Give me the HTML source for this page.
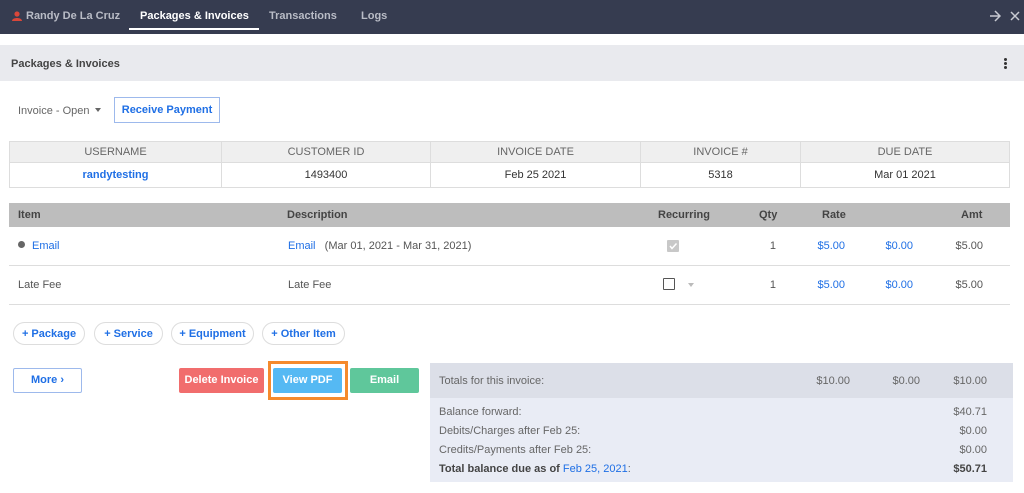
<!DOCTYPE html>
<html><head><style>
*{margin:0;padding:0;box-sizing:border-box}
body{width:1024px;height:493px;background:#fff;font-family:"Liberation Sans",sans-serif;font-size:11px;color:#555;position:relative;overflow:hidden}
.a{position:absolute}
.nav{left:0;top:0;width:1024px;height:34px;background:#363c50}
.nav span{position:absolute;top:10px;font-size:11px;font-weight:bold;color:#b9bcc6}
.blue{color:#1f6fe5}
table{border-collapse:collapse}
.ct td{border:1px solid #ddd;text-align:center;font-size:11px}
.btn{position:absolute;text-align:center;font-size:11px;font-weight:bold;color:#fff;border-radius:2px}
.pill{position:absolute;top:322px;height:23px;border:1px solid #ddd;border-radius:12px;color:#1f6fe5;font-weight:bold;font-size:11px;line-height:22px;text-align:center}
.r{position:absolute;text-align:right}
</style></head><body>
<div class="a nav">
 <svg class="a" style="left:12px;top:11px" width="10" height="10" viewBox="0 0 10 10"><circle cx="5" cy="3" r="2.6" fill="#d9473a"/><path d="M0 10 C0 6 10 6 10 10Z" fill="#d9473a"/></svg>
 <span style="left:26px">Randy De La Cruz</span>
 <span style="left:140px;color:#fff">Packages &amp; Invoices</span>
 <div class="a" style="left:129px;top:28px;width:130px;height:2px;background:#fff"></div>
 <span style="left:269px">Transactions</span>
 <span style="left:361px">Logs</span>
 <svg class="a" style="left:989px;top:10px" width="12" height="12" viewBox="0 0 12 12"><path d="M1 6H11M6 1L11 6L6 11" stroke="#c8cad2" stroke-width="1.5" fill="none"/></svg>
 <svg class="a" style="left:1010px;top:11px" width="10" height="10" viewBox="0 0 10 10"><path d="M1 1L9 9M9 1L1 9" stroke="#c8cad2" stroke-width="1.5"/></svg>
</div>
<div class="a" style="left:0;top:45px;width:1024px;height:36px;background:#e9eaee"></div>
<div class="a" style="left:11px;top:58px;font-size:11px;font-weight:bold;color:#444">Packages &amp; Invoices</div>
<div class="a" style="left:1004px;top:58px;width:3px;height:3px;background:#333;border-radius:50%;box-shadow:0 4px 0 #333,0 8px 0 #333"></div>
<div class="a" style="left:18px;top:105px;color:#666">Invoice - Open</div>
<div class="a" style="left:95px;top:108px;border:3.5px solid transparent;border-top:4px solid #666"></div>
<div class="a" style="left:114px;top:97px;width:106px;height:26px;border:1px solid #9db9ec;color:#1f6fe5;font-weight:bold;text-align:center;line-height:25px">Receive Payment</div>

<table class="a ct" style="left:9px;top:141px;width:1001px">
<tr style="height:21px;background:#efefef;color:#666"><td style="width:212px">USERNAME</td><td style="width:209px">CUSTOMER ID</td><td style="width:210px">INVOICE DATE</td><td style="width:160px">INVOICE #</td><td>DUE DATE</td></tr>
<tr style="height:25px;color:#333"><td class="blue" style="font-weight:bold">randytesting</td><td>1493400</td><td>Feb 25 2021</td><td>5318</td><td>Mar 01 2021</td></tr>
</table>

<div class="a" style="left:9px;top:203px;width:1001px;height:24px;background:#bdbdbd"></div>
<div class="a" style="left:18px;top:209px;font-weight:bold;color:#444">Item</div>
<div class="a" style="left:287px;top:209px;font-weight:bold;color:#444">Description</div>
<div class="a" style="left:658px;top:209px;font-weight:bold;color:#444">Recurring</div>
<div class="a" style="left:759px;top:209px;font-weight:bold;color:#444">Qty</div>
<div class="a" style="left:822px;top:209px;font-weight:bold;color:#444">Rate</div>
<div class="a" style="left:961px;top:209px;font-weight:bold;color:#444">Amt</div>

<div class="a" style="left:18px;top:241px;width:7px;height:7px;border-radius:50%;background:#666"></div>
<div class="a blue" style="left:32px;top:240px">Email</div>
<div class="a" style="left:288px;top:240px"><span class="blue">Email</span>&nbsp;&nbsp;&nbsp;(Mar 01, 2021 - Mar 31, 2021)</div>
<div class="a" style="left:667px;top:240px;width:12px;height:12px;background:#c8c8c8;border-radius:1px"></div>
<svg class="a" style="left:667px;top:240px" width="12" height="12"><path d="M3 6L5 8.5L9.5 3.5" stroke="#fff" stroke-width="1.5" fill="none"/></svg>
<div class="a" style="left:9px;top:265px;width:1001px;height:1px;background:#ddd"></div>
<div class="a" style="left:18px;top:279px">Late Fee</div>
<div class="a" style="left:288px;top:279px">Late Fee</div>
<div class="a" style="left:663px;top:278px;width:12px;height:12px;border:1.5px solid #555;border-radius:1px"></div>
<div class="a" style="left:688px;top:283px;border:3.5px solid transparent;border-top:4px solid #bbb"></div>
<div class="a" style="left:9px;top:304px;width:1001px;height:1px;background:#ddd"></div>

<div class="r" style="left:740px;top:240px;width:36px">1</div>
<div class="r blue" style="left:800px;top:240px;width:45px">$5.00</div>
<div class="r blue" style="left:868px;top:240px;width:45px">$0.00</div>
<div class="r" style="left:938px;top:240px;width:45px">$5.00</div>
<div class="r" style="left:740px;top:279px;width:36px">1</div>
<div class="r blue" style="left:800px;top:279px;width:45px">$5.00</div>
<div class="r blue" style="left:868px;top:279px;width:45px">$0.00</div>
<div class="r" style="left:938px;top:279px;width:45px">$5.00</div>

<div class="pill" style="left:13px;width:72px">+ Package</div>
<div class="pill" style="left:94px;width:69px">+ Service</div>
<div class="pill" style="left:171px;width:83px">+ Equipment</div>
<div class="pill" style="left:262px;width:83px">+ Other Item</div>

<div class="a" style="left:13px;top:368px;width:69px;height:25px;border:1px solid #9db9ec;border-radius:2px;color:#1f6fe5;font-weight:bold;text-align:center;line-height:23px">More ›</div>
<div class="btn" style="left:179px;top:368px;width:85px;height:25px;line-height:25px;background:#f16d6d">Delete Invoice</div>
<div class="a" style="left:268px;top:361px;width:80px;height:39px;border:3px solid #f58a2c"></div>
<div class="btn" style="left:273px;top:368px;width:69px;height:25px;line-height:25px;background:#55b9f3">View PDF</div>
<div class="btn" style="left:350px;top:368px;width:69px;height:25px;line-height:25px;background:#5fc79b">Email</div>

<div class="a" style="left:430px;top:363px;width:583px;height:35px;background:#dcdfe8"></div>
<div class="a" style="left:430px;top:398px;width:583px;height:84px;background:#e9ecf5"></div>
<div class="a" style="left:439px;top:375px;color:#666">Totals for this invoice:</div>
<div class="r" style="left:790px;top:375px;width:60px;color:#666">$10.00</div>
<div class="r" style="left:860px;top:375px;width:60px;color:#666">$0.00</div>
<div class="r" style="left:927px;top:375px;width:60px;color:#666">$10.00</div>
<div class="a" style="left:439px;top:403px;line-height:19px;color:#666">Balance forward:<br>Debits/Charges after Feb 25:<br>Credits/Payments after Feb 25:<br><b style="color:#444">Total balance due as of </b><span class="blue">Feb 25, 2021</span>:</div>
<div class="r" style="left:900px;top:403px;width:87px;line-height:19px;color:#666">$40.71<br>$0.00<br>$0.00<br><b style="color:#444">$50.71</b></div>
</body></html>
